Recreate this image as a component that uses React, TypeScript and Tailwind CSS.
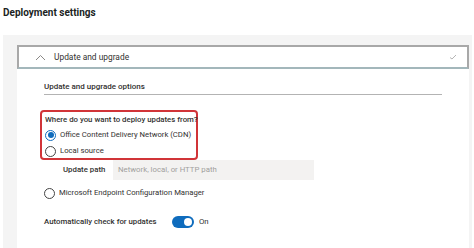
import { ReactNode } from 'react'

function Radio({ checked, children }: { checked?: boolean; children: ReactNode }) {
  return (
    <div className="flex items-center gap-[4px] h-[16px]">
      <span
        className={`w-[11px] h-[11px] rounded-full border flex items-center justify-center shrink-0 ${
          checked ? 'border-[#0f6cbd]' : 'border-[#444]'
        }`}
      >
        {checked && <span className="w-[6px] h-[6px] rounded-full bg-[#0f6cbd]" />}
      </span>
      <span className="text-[7.7px] text-[#323130] whitespace-nowrap">{children}</span>
    </div>
  )
}

export default function App() {
  return (
    <div
      className="w-[474px] h-[248px] bg-white overflow-hidden flex flex-col text-[#201f1e]"
      style={{ fontFamily: 'Roboto, "Open Sans", sans-serif' }}
    >
      <div className="h-[35px] pl-[3px] pt-[5px] text-[10px] font-bold whitespace-nowrap">Deployment settings</div>

      <div className="flex-1 ml-[3px] mr-[2px] bg-[#f4f4f4] pl-[14px] pr-[3px] pt-[10px] flex flex-col">
        {/* accordion header */}
        <div className="h-[24px] bg-white border-2 border-[#a8a8a8] border-b-[#a3b7bb] flex items-center pl-[16px] pr-[10px]">
          <svg width="11" height="7" viewBox="0 0 11 7" className="shrink-0">
            <path d="M1 6 L5.5 1.5 L10 6" fill="none" stroke="#8a8886" strokeWidth="1" />
          </svg>
          <span className="ml-[8px] text-[8.4px] text-[#323130] whitespace-nowrap">Update and upgrade</span>
          <svg width="8" height="6" viewBox="0 0 8 6" className="ml-auto shrink-0">
            <path d="M1 3.5 L3 5 L7 1" fill="none" stroke="#b5b5b5" strokeWidth="1" />
          </svg>
        </div>

        {/* body */}
        <div className="flex-1 bg-white pl-[27px] pr-[27px] pt-[10px]">
          <div className="text-[8px] font-medium text-[#323130] h-[16px] leading-[16px] border-b border-[#b3b3b3] whitespace-nowrap">
            Update and upgrade options
          </div>

          <div className="mt-[15px] ml-[-4px] w-[158px] h-[50px] border-2 border-[#d13438] rounded-[4px] pl-[3px]">
            <div className="text-[7.8px] font-medium text-[#323130] h-[15px] leading-[15px] whitespace-nowrap">
              Where do you want to deploy updates from?
            </div>
            <Radio checked>Office Content Delivery Network (CDN)</Radio>
            <Radio>Local source</Radio>
          </div>

          <div className="flex items-center h-[20px]">
            <span className="ml-[19px] w-[50px] text-[7.8px] font-medium text-[#323130] whitespace-nowrap">Update path</span>
            <div className="w-[201px] h-[20px] bg-[#f3f2f1] flex items-center pl-[5px] text-[7.8px] text-[#a19f9d] whitespace-nowrap">
              Network, local, or HTTP path
            </div>
          </div>

          <div className="mt-[5px]">
            <Radio>Microsoft Endpoint Configuration Manager</Radio>
          </div>

          <div className="flex items-center mt-[13px] h-[16px]">
            <span className="w-[128px] text-[7.8px] font-medium text-[#323130] whitespace-nowrap">Automatically check for updates</span>
            <span className="w-[22px] h-[12px] rounded-full bg-[#0f6cbd] flex items-center justify-end pr-[2px]">
              <span className="w-[8px] h-[8px] rounded-full bg-white" />
            </span>
            <span className="ml-[5px] text-[7.8px] text-[#323130]">On</span>
          </div>
        </div>
      </div>
    </div>
  )
}
